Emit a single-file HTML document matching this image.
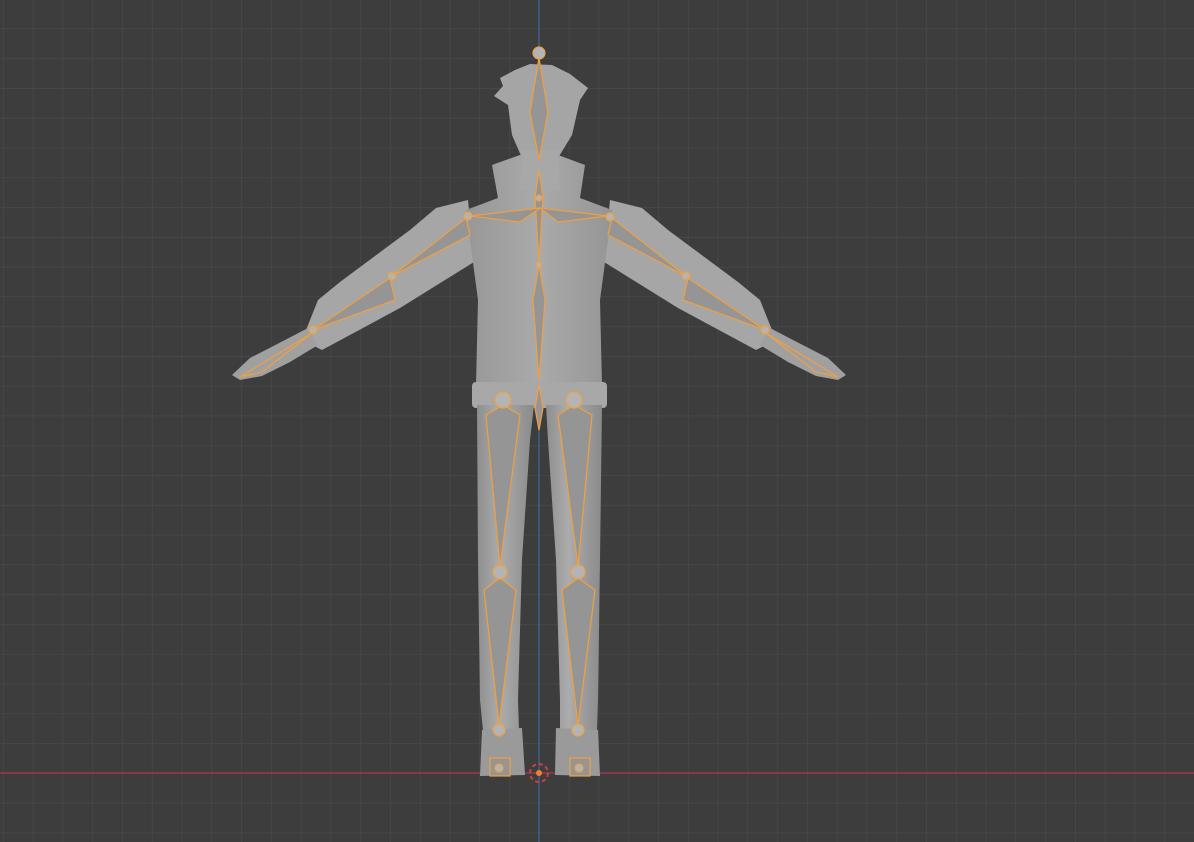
<!DOCTYPE html>
<html><head><meta charset="utf-8"><style>
html,body{margin:0;padding:0;background:#3d3d3d;overflow:hidden}
svg{display:block}
</style></head><body>
<svg width="1194" height="842" viewBox="0 0 1194 842" xmlns="http://www.w3.org/2000/svg">
<defs>
<pattern id="g" x="539" y="773" width="29.78" height="29.78" patternUnits="userSpaceOnUse">
<path d="M0 0H29.78M0 0V29.78" stroke="#4b4b4b" stroke-width="1.2" fill="none"/>
</pattern>
<linearGradient id="leg" x1="0" x2="1" y1="0" y2="0">
<stop offset="0" stop-color="#8e8e8e"/><stop offset="0.4" stop-color="#acacac"/><stop offset="1" stop-color="#8a8a8a"/>
</linearGradient>
<linearGradient id="body" x1="0" x2="1">
<stop offset="0" stop-color="#979797"/><stop offset="0.5" stop-color="#aaaaaa"/><stop offset="1" stop-color="#959595"/>
</linearGradient>
</defs>
<rect width="1194" height="842" fill="#3d3d3d"/>
<rect width="1194" height="842" fill="url(#g)"/>
<line x1="0" y1="773" x2="1194" y2="773" stroke="#9a3a45" stroke-width="1.5"/>
<line x1="539" y1="0" x2="539" y2="842" stroke="#3f5f8a" stroke-width="1.5"/>
<g fill="#a2a2a2">
<path d="M468 200 L436 208 L410 230 L340 282 L318 300 L306 330 L312 345 L322 350 L400 308 L474 262 Z" fill="#a6a6a6"/>
<path d="M308 328 L285 340 L250 358 L232 375 L240 380 L262 376 L290 362 L318 345 Z" fill="#a0a0a0"/>
<path d="M610 200 L642 208 L668 230 L738 282 L760 300 L772 330 L766 345 L756 350 L678 308 L604 262 Z" fill="#a6a6a6"/>
<path d="M770 328 L793 340 L828 358 L846 375 L838 380 L816 376 L788 362 L760 345 Z" fill="#a0a0a0"/>
<path d="M492 165 L520 155 L558 155 L585 165 L580 198 L612 210 L604 270 L600 300 L602 385 L476 385 L478 300 L474 270 L466 210 L498 198 Z" fill="url(#body)"/>
<rect x="472" y="382" width="135" height="26" rx="4" fill="#a8a8a8"/>
<path d="M477 405 L534 405 L530 440 L522 560 L518 700 L520 760 L486 762 L480 700 L478 560 Z" fill="url(#leg)"/>
<path d="M546 405 L602 405 L600 560 L598 700 L596 762 L560 760 L560 700 L556 560 L548 440 Z" fill="url(#leg)"/>
<path d="M482 730 L522 728 L525 775 L480 776 Z" fill="#9a9a9a"/>
<path d="M556 728 L598 730 L600 776 L555 775 Z" fill="#9a9a9a"/>
<path d="M512 135 L508 105 L494 96 L503 86 L500 78 L515 70 L530 64 L552 65 L570 74 L588 88 L580 100 L572 135 L558 158 L522 158 Z" fill="#a5a5a5"/>
<path d="M522 150 L558 150 L560 190 L520 190 Z" fill="#a8a8a8"/>
</g>
<g fill="#959595" stroke="#f0a040" stroke-width="1.2">
<path d="M539 58 L548 112 L539 160 L530 112 Z"/>
<path d="M539 170 L543 198 L539 262 L535 198 Z"/>
<path d="M539 265 L545 300 L539 380 L533 300 Z"/>
<path d="M539 385 L543 408 L539 430 L535 408 Z"/>
<path d="M470 216 L540 208 L520 222 Z"/>
<path d="M608 216 L540 208 L558 222 Z"/>
<path d="M466 218 L470 235 L392 276 Z"/>
<path d="M390 278 L395 300 L313 330 Z"/>
<path d="M612 218 L608 235 L686 276 Z"/>
<path d="M688 278 L683 300 L765 330 Z"/>
<path d="M503 405 L520 415 L500 566 L486 415 Z"/>
<path d="M574 405 L592 415 L578 566 L558 415 Z"/>
<path d="M500 578 L516 590 L499 725 L484 590 Z"/>
<path d="M578 578 L595 590 L578 725 L562 590 Z"/>
<path d="M240 377 L312 333 L262 372 Z" fill="none"/>
<path d="M838 377 L766 333 L816 372 Z" fill="none"/>
<rect x="490" y="758" width="20" height="18"/>
<rect x="570" y="758" width="20" height="18"/>
</g>
<g fill="#b4b4b4" stroke="#f0a040" stroke-width="1.2">
<circle cx="539" cy="53" r="6"/>
<circle cx="539" cy="198" r="3"/>
<circle cx="539" cy="265" r="3"/>
<circle cx="468" cy="216" r="4"/>
<circle cx="610" cy="217" r="4"/>
<circle cx="392" cy="276" r="4"/>
<circle cx="686" cy="276" r="4"/>
<circle cx="313" cy="330" r="4"/>
<circle cx="765" cy="330" r="4"/>
<circle cx="503" cy="400" r="8"/>
<circle cx="574" cy="400" r="8"/>
<circle cx="500" cy="572" r="7"/>
<circle cx="578" cy="572" r="7"/>
<circle cx="499" cy="730" r="6"/>
<circle cx="578" cy="730" r="6"/>
<circle cx="499" cy="768" r="4"/>
<circle cx="579" cy="768" r="4"/>
</g>
<circle cx="539" cy="773" r="9" fill="none" stroke="#d04040" stroke-width="2" stroke-dasharray="4 3"/>
<circle cx="539" cy="773" r="3" fill="#f08030"/>
</svg>
</body></html>
